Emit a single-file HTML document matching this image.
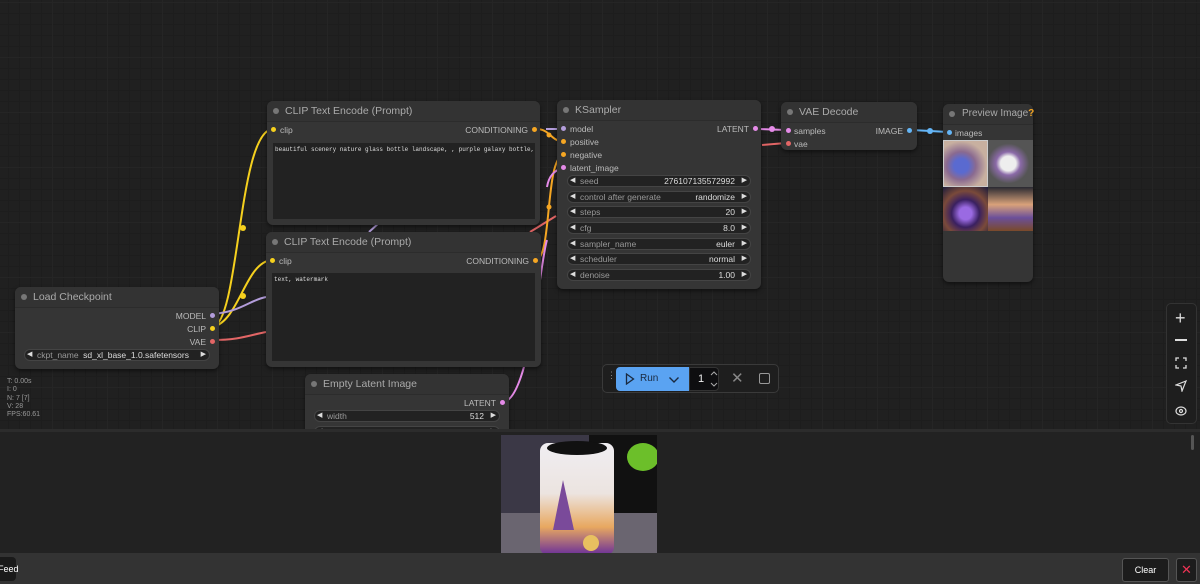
<!DOCTYPE html>
<html><head><meta charset="utf-8"><style>
*{box-sizing:border-box;margin:0;padding:0}
body{width:1200px;height:584px;overflow:hidden;background:#202020;font-family:"Liberation Sans",sans-serif;position:relative;color:#ccc}
.grid{position:absolute;left:0;top:0;width:1200px;height:430px;background-color:#202020;
background-image:linear-gradient(#252525 1px,transparent 1px),linear-gradient(90deg,#252525 1px,transparent 1px),linear-gradient(#1d1d1d 1px,transparent 1px),linear-gradient(90deg,#1d1d1d 1px,transparent 1px);
background-size:55px 55px,55px 55px,11px 11px,11px 11px;background-position:-3px 2px}
.node{position:absolute;background:#353535;border-radius:6px;box-shadow:0 2px 4px rgba(0,0,0,.5)}
.title{height:21px;border-bottom:1px solid #2c2c2c;font-size:10.5px;color:#aaa;padding-left:18px;line-height:20px;position:relative;background:#333;border-radius:6px 6px 0 0;white-space:nowrap}
.title:before{content:"";position:absolute;left:6px;top:7px;width:6px;height:6px;border-radius:50%;background:#777}
.slot{position:absolute;font-size:8.5px;color:#bbb;line-height:10px}
.dot{position:absolute;width:5px;height:5px;border-radius:50%}
.ta{position:absolute;background:#222;font-family:"Liberation Mono",monospace;font-size:6px;color:#ddd;padding:3px 2px;white-space:nowrap;overflow:hidden}
.w{position:absolute;height:12px;border-radius:7px;background:#222;border:1px solid #444;font-size:8.5px;line-height:10px;color:#999}
.w .l{position:absolute;left:12px}.w .v{position:absolute;right:15px;color:#ddd}
.w:before{content:"◀";position:absolute;left:2px;font-size:7px;color:#ddd}
.w:after{content:"▶";position:absolute;right:3px;font-size:7px;color:#ddd}
</style></head><body>
<div class="grid"></div>
<svg width="1200" height="430" style="position:absolute;left:0;top:0" fill="none" stroke-width="2">
<path d="M213 327 C240 320,238 130,273 129" stroke="#f5d01e"/>
<path d="M213 327 C240 320,245 262,272 260" stroke="#f5d01e"/>
<circle cx="243" cy="228" r="3" fill="#f5d01e"/><circle cx="243" cy="296" r="3" fill="#f5d01e"/>
<path d="M213 314 C240 312,250 300,266 297" stroke="#b39ddb"/>
<path d="M213 340 C240 340,250 335,266 332" stroke="#e36666"/>
<path d="M369 232 L380 222" stroke="#b39ddb"/>
<path d="M530 232 L556 216" stroke="#e36666"/>
<path d="M536 129 C550 129,550 140,563 142" stroke="#f5a623"/>
<path d="M536 260 C552 258,545 160,563 155" stroke="#f5a623"/>
<circle cx="549" cy="135" r="2.5" fill="#f5a623"/><circle cx="549" cy="207" r="2.5" fill="#f5a623"/>
<path d="M546 129 L563 129" stroke="#b39ddb"/>
<path d="M503 402 C530 400,540 260,547 240" stroke="#e58be8"/>
<path d="M547 187 C549 175,555 170,563 168" stroke="#e58be8"/>
<path d="M758 129 L786 130" stroke="#e58be8"/><circle cx="772" cy="129" r="3" fill="#e58be8"/>
<path d="M762 145 L786 143" stroke="#e36666"/>
<path d="M912 130 L948 132" stroke="#64b5f6"/><circle cx="930" cy="131" r="3" fill="#64b5f6"/>
</svg>

<div class="node" style="left:267px;top:101px;width:273px;height:124px">
<div class="title">CLIP Text Encode (Prompt)</div>
<div class="dot" style="background:#f5d01e;left:4px;top:26px"></div><div class="slot" style="left:13px;top:24px">clip</div>
<div class="slot" style="right:12px;top:24px">CONDITIONING</div><div class="dot" style="background:#f5a623;right:3px;top:26px"></div>
<div class="ta" style="left:6px;top:42px;width:262px;height:76px">beautiful scenery nature glass bottle landscape, , purple galaxy bottle,</div>
</div>
<div class="node" style="left:266px;top:232px;width:275px;height:135px">
<div class="title">CLIP Text Encode (Prompt)</div>
<div class="dot" style="background:#f5d01e;left:4px;top:26px"></div><div class="slot" style="left:13px;top:24px">clip</div>
<div class="slot" style="right:12px;top:24px">CONDITIONING</div><div class="dot" style="background:#f5a623;right:3px;top:26px"></div>
<div class="ta" style="left:6px;top:41px;width:263px;height:88px">text, watermark</div>
</div>
<div class="node" style="left:557px;top:100px;width:204px;height:189px">
<div class="title">KSampler</div>
<div class="dot" style="background:#b39ddb;left:4px;top:26px"></div><div class="slot" style="left:13px;top:24px">model</div>
<div class="slot" style="right:12px;top:24px">LATENT</div><div class="dot" style="background:#e58be8;right:3px;top:26px"></div>
<div class="dot" style="background:#f5a623;left:4px;top:39px"></div><div class="slot" style="left:13px;top:37px">positive</div>
<div class="dot" style="background:#f5a623;left:4px;top:52px"></div><div class="slot" style="left:13px;top:50px">negative</div>
<div class="dot" style="background:#e58be8;left:4px;top:65px"></div><div class="slot" style="left:13px;top:63px">latent_image</div>
<div class="w" style="left:10px;top:75px;width:184px"><span class="l">seed</span><span class="v">276107135572992</span></div>
<div class="w" style="left:10px;top:91px;width:184px"><span class="l">control after generate</span><span class="v">randomize</span></div>
<div class="w" style="left:10px;top:106px;width:184px"><span class="l">steps</span><span class="v">20</span></div>
<div class="w" style="left:10px;top:122px;width:184px"><span class="l">cfg</span><span class="v">8.0</span></div>
<div class="w" style="left:10px;top:138px;width:184px"><span class="l">sampler_name</span><span class="v">euler</span></div>
<div class="w" style="left:10px;top:153px;width:184px"><span class="l">scheduler</span><span class="v">normal</span></div>
<div class="w" style="left:10px;top:169px;width:184px"><span class="l">denoise</span><span class="v">1.00</span></div>
</div>
<div class="node" style="left:781px;top:102px;width:136px;height:48px">
<div class="title">VAE Decode</div>
<div class="dot" style="background:#e58be8;left:5px;top:26px"></div><div class="slot" style="left:13px;top:24px">samples</div>
<div class="slot" style="right:14px;top:24px">IMAGE</div><div class="dot" style="background:#64b5f6;right:5px;top:26px"></div>
<div class="dot" style="background:#e36666;left:5px;top:39px"></div><div class="slot" style="left:13px;top:37px">vae</div>
</div>
<div class="node" style="left:943px;top:104px;width:90px;height:178px">
<div class="title" style="font-size:10px;padding-left:19px">Preview Image<span style="color:#f5a623;font-weight:bold">?</span></div>
<div class="dot" style="background:#64b5f6;left:4px;top:26px"></div><div class="slot" style="left:12px;top:24px">images</div>
<div style="position:absolute;left:0;top:36px;width:90px;height:91px;display:grid;grid-template-columns:1fr 1fr">
<div style="background:radial-gradient(ellipse at 40% 55%,#5a6ad0 20%,#8a6a90 40%,#c8b0a0 70%);border:1px solid #ccc"></div>
<div style="background:radial-gradient(ellipse at 45% 50%,#eee 22%,#8b6aa8 35%,#555 60%)"></div>
<div style="background:radial-gradient(circle at 50% 60%,#9a6ae2 18%,#3a2060 40%,#7a4a3a 65%,#1b1b3b)"></div>
<div style="background:linear-gradient(180deg,#2a2a32,#d9a27a 40%,#6b4f9a 70%,#7a4a2a)"></div>
</div></div>
<div class="node" style="left:15px;top:287px;width:204px;height:82px">
<div class="title">Load Checkpoint</div>
<div class="slot" style="right:13px;top:24px">MODEL</div><div class="dot" style="background:#b39ddb;right:4px;top:26px"></div>
<div class="slot" style="right:13px;top:37px">CLIP</div><div class="dot" style="background:#f5d01e;right:4px;top:39px"></div>
<div class="slot" style="right:13px;top:50px">VAE</div><div class="dot" style="background:#e36666;right:4px;top:52px"></div>
<div class="w" style="left:9px;top:62px;width:186px;color:#999"><span class="l">ckpt_name</span><span class="v" style="right:20px">sd_xl_base_1.0.safetensors</span></div>
</div>
<div class="node" style="left:305px;top:374px;width:204px;height:70px">
<div class="title">Empty Latent Image</div>
<div class="slot" style="right:13px;top:24px">LATENT</div><div class="dot" style="background:#e58be8;right:4px;top:26px"></div>
<div class="w" style="left:9px;top:36px;width:186px"><span class="l">width</span><span class="v">512</span></div>
<div class="w" style="left:9px;top:52px;width:186px"></div>
</div>
<div style="position:absolute;left:7px;top:378px;font-size:7px;line-height:8.3px;color:#999">T: 0.00s<br>I: 0<br>N: 7 [7]<br>V: 28<br>FPS:60.61</div>
<div style="position:absolute;left:602px;top:364px;width:177px;height:29px;background:#1e1e1e;border:1px solid #3a3a3a;border-radius:5px">
<div style="position:absolute;left:4px;top:9px;color:#888;font-size:9px;line-height:3px">⋮⋮</div>
<div style="position:absolute;left:13px;top:2px;width:73px;height:24px;background:#5aa3f2;border-radius:4px 0 0 4px;color:#1a2a40;font-size:10px;line-height:24px">
<svg width="10" height="12" style="position:absolute;left:9px;top:6px"><path d="M1.5 1 L8.5 6 L1.5 11 Z" fill="none" stroke="#1a2a40" stroke-width="1.3"/></svg>
<span style="position:absolute;left:24px">Run</span>
<svg width="12" height="8" style="position:absolute;left:52px;top:9px"><path d="M1.5 1.5 L6 6 L10.5 1.5" fill="none" stroke="#1a2a40" stroke-width="1.4"/></svg></div>
<div style="position:absolute;left:86px;top:2px;width:30px;height:24px;background:#0e0e10;border:1px solid #333;border-radius:0 4px 4px 0;color:#eee;font-size:11px;line-height:22px;padding-left:8px">1
<svg width="8" height="18" style="position:absolute;left:20px;top:2px" fill="none" stroke="#aaa" stroke-width="1"><path d="M1 5L4 2L7 5M1 13L4 16L7 13"/></svg></div>
<div style="position:absolute;left:128px;top:4px;color:#888;font-size:15px">✕</div>
<div style="position:absolute;left:156px;top:8px;width:11px;height:11px;border:1.5px solid #999;border-radius:2px"></div>
</div>
<div style="position:absolute;left:1166px;top:303px;width:31px;height:121px;background:#1e1e1e;border:1px solid #333;border-radius:5px;color:#ddd;text-align:center">
<div style="position:absolute;left:8px;top:4px;font-size:18px">+</div>
<div style="position:absolute;left:8px;top:35px;width:12px;height:1.5px;background:#ddd"></div>
<svg width="12" height="12" style="position:absolute;left:8px;top:53px" fill="none" stroke="#ddd" stroke-width="1.3"><path d="M1 4V1H4M8 1H11V4M11 8V11H8M4 11H1V8"/></svg>
<svg width="12" height="12" style="position:absolute;left:8px;top:76px" fill="none" stroke="#ddd" stroke-width="1.2"><path d="M11 1L1 5L6 6L7 11Z"/></svg>
<svg width="12" height="10" style="position:absolute;left:8px;top:102px" fill="none" stroke="#ddd" stroke-width="1.2"><ellipse cx="6" cy="5" rx="5" ry="4"/><circle cx="6" cy="5" r="1.5"/></svg>
</div>
<div style="position:absolute;left:0;top:429px;width:1200px;height:3px;background:#2c2c2c"></div>
<div style="position:absolute;left:0;top:432px;width:1200px;height:121px;background:#222"></div>
<div style="position:absolute;left:1191px;top:435px;width:3px;height:15px;background:#555;border-radius:2px"></div>
<svg width="156" height="118" style="position:absolute;left:501px;top:435px">
<defs><linearGradient id="cy" x1="0" y1="0" x2="0" y2="1"><stop offset="0" stop-color="#f0eef2"/><stop offset=".45" stop-color="#ece4e0"/><stop offset=".75" stop-color="#e8a860"/><stop offset="1" stop-color="#6a2f9a"/></linearGradient></defs>
<rect width="156" height="118" fill="#3b3846"/><rect x="88" width="68" height="80" fill="#111"/>
<rect y="78" width="156" height="40" fill="#6a6570"/>
<ellipse cx="142" cy="22" rx="16" ry="14" fill="#6cbf2a"/>
<rect x="39" y="8" width="74" height="112" rx="8" fill="url(#cy)"/>
<ellipse cx="76" cy="13" rx="30" ry="7" fill="#111"/>
<path d="M62 45 L73 95 L52 95Z" fill="#7a4a9a"/><circle cx="90" cy="108" r="8" fill="#e8c060"/>
</svg>
<div style="position:absolute;left:0;top:553px;width:1200px;height:31px;background:#333"></div>
<div style="position:absolute;left:-8px;top:557px;width:24px;height:24px;background:#1a1a1a;border-radius:4px;font-size:9px;color:#fff;line-height:24px;padding-left:6px">Feed</div>
<div style="position:absolute;left:1122px;top:558px;width:47px;height:24px;background:#1c1c1c;border:1px solid #555;border-radius:3px;font-size:9px;color:#fff;text-align:center;line-height:22px">Clear</div>
<div style="position:absolute;left:1176px;top:558px;width:21px;height:24px;background:#1c1c1c;border:1px solid #555;border-radius:3px;font-size:13px;color:#e35;text-align:center;line-height:22px">✕</div>
</body></html>
